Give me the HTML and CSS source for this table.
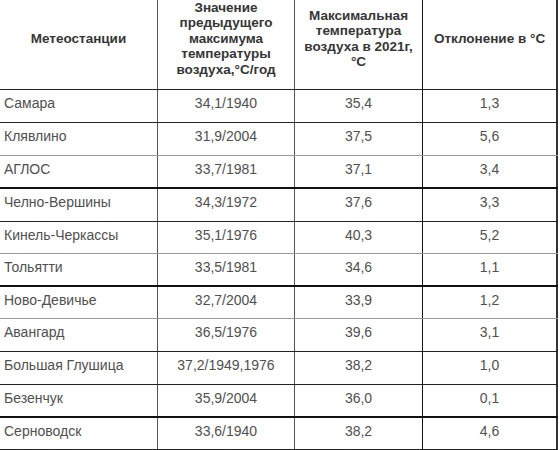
FILE: index.html
```html
<!DOCTYPE html>
<html lang="ru">
<head>
<meta charset="utf-8">
<link rel="stylesheet" href="styles.css">
</head>
<body>
<div class="table">
  <div class="row head">
    <div class="cell">Метеостанции</div>
    <div class="cell">Значение предыдущего максимума температуры воздуха,°С/год</div>
    <div class="cell">Максимальная температура воздуха в 2021г, °С</div>
    <div class="cell">Отклонение в °С</div>
  </div>
  <div class="row h33 dark"><div class="cell">Самара</div><div class="cell">34,1/1940</div><div class="cell">35,4</div><div class="cell">1,3</div></div>
  <div class="row h33 gray"><div class="cell">Клявлино</div><div class="cell">31,9/2004</div><div class="cell">37,5</div><div class="cell">5,6</div></div>
  <div class="row h33 thick"><div class="cell">АГЛОС</div><div class="cell">33,7/1981</div><div class="cell">37,1</div><div class="cell">3,4</div></div>
  <div class="row h33 dark"><div class="cell">Челно-Вершины</div><div class="cell">34,3/1972</div><div class="cell">37,6</div><div class="cell">3,3</div></div>
  <div class="row h32 gray"><div class="cell">Кинель-Черкассы</div><div class="cell">35,1/1976</div><div class="cell">40,3</div><div class="cell">5,2</div></div>
  <div class="row h33 thick"><div class="cell">Тольятти</div><div class="cell">33,5/1981</div><div class="cell">34,6</div><div class="cell">1,1</div></div>
  <div class="row h32 gray"><div class="cell">Ново-Девичье</div><div class="cell">32,7/2004</div><div class="cell">33,9</div><div class="cell">1,2</div></div>
  <div class="row h33 dark"><div class="cell">Авангард</div><div class="cell">36,5/1976</div><div class="cell">39,6</div><div class="cell">3,1</div></div>
  <div class="row h33 dark"><div class="cell">Большая Глушица</div><div class="cell">37,2/1949,1976</div><div class="cell">38,2</div><div class="cell">1,0</div></div>
  <div class="row h33 thick"><div class="cell">Безенчук</div><div class="cell">35,9/2004</div><div class="cell">36,0</div><div class="cell">0,1</div></div>
  <div class="row h32 dark"><div class="cell">Серноводск</div><div class="cell">33,6/1940</div><div class="cell">38,2</div><div class="cell">4,6</div></div>
</div>
</body>
</html>
```
FILE: styles.css
```css
html, body {
  margin: 0;
  padding: 0;
  background: #ffffff;
}
body {
  font-family: "Liberation Sans", Arial, sans-serif;
  color: #505050;
  font-size: 14px;
}
.table {
  width: 558px;
}
.row {
  display: grid;
  grid-template-columns: 158px 137px 128px 135px;
  box-sizing: border-box;
  border-bottom: 1px solid #222;
}
.row .cell {
  box-sizing: border-box;
  border-right: 1px solid #555;
  padding: 5px 4px 0;
  line-height: 16px;
  text-align: center;
}
.row .cell:first-child {
  text-align: left;
}
.row .cell:nth-child(3) {
  border-right-color: #111;
}
.row .cell:last-child {
  border-right: 2px solid #333;
}
.head {
  height: 90px;
}
.head .cell {
  display: flex;
  align-items: center;
  justify-content: center;
  text-align: center;
  font-weight: bold;
  font-size: 13.5px;
  line-height: 15.4px;
  color: #363636;
  padding: 0 3px 12px;
}
.head .cell:first-child {
  text-align: center;
}
.h33 { height: 33px; }
.h32 { height: 32px; }
.gray { border-bottom-color: #999; }
.thick { border-bottom: 2px solid #111; }
```
